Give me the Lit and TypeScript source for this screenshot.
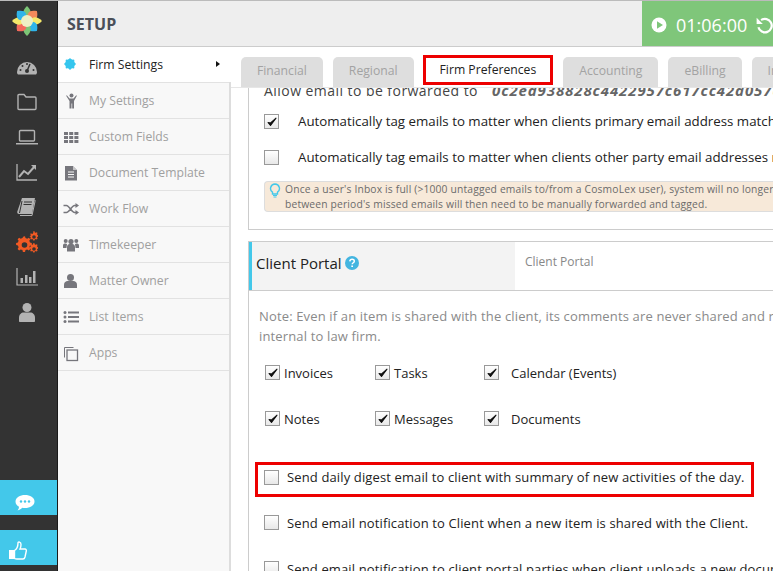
import { LitElement, html, css, svg } from "lit";
import { customElement } from "lit/decorators.js";

const railIcons = [
  svg`<path d="M1 16a10 10 0 1 1 20 0c0 1-.4 2-1 2.500H2c-.6-.5-1-1.500-1-2.500z" fill="#b3b3b3"/><circle cx="11" cy="15" r="2" fill="#333"/><path d="M11 15l3-7" stroke="#333" stroke-width="1.500"/><g fill="#333"><circle cx="4.500" cy="14" r="1"/><circle cx="6.500" cy="10" r="1"/><circle cx="11" cy="8" r="1"/><circle cx="17.500" cy="14" r="1"/></g>`,
  svg`<path d="M2 17.500V4.500c0-.6.400-1 1-1h5l2 2.500h9c.6 0 1 .4 1 1v10.500c0 .6-.4 1-1 1H3c-.6 0-1-.4-1-1z" fill="none" stroke="#b3b3b3" stroke-width="1.400"/>`,
  svg`<rect x="3.500" y="4.500" width="15" height="10.500" rx="1" fill="none" stroke="#b3b3b3" stroke-width="1.400"/><path d="M0 17h22v1.500H0z" fill="#b3b3b3"/>`,
  svg`<path d="M1 3v16h20" fill="none" stroke="#b3b3b3" stroke-width="1.300"/><path d="M3 16l5-6 4 3 7-8" fill="none" stroke="#b3b3b3" stroke-width="2"/><path d="M15 4h5v5z" fill="#b3b3b3"/>`,
  svg`<path d="M6 2h13l-3 16H3c-1.500 0-2-1-1.700-2.500z" fill="#b3b3b3"/><path d="M6 5l-2.500 12M8 6h8M7.500 8.500h8" stroke="#333" stroke-width="1"/><path d="M19 4v1.500l-3 14H4" fill="none" stroke="#b3b3b3"/>`,
  svg`<g fill="#f15a24"><path d="M7.500 5.500l1.500-.3.500 1.800 1.700.7 1.600-1 1.500 1.500-1 1.600.7 1.700 1.800.5v2.100l-1.800.5-.7 1.700 1 1.600-1.500 1.500-1.600-1-1.700.7-.5 1.800h-2.100l-.5-1.800-1.700-.7-1.600 1-1.500-1.500 1-1.600-.7-1.700-1.800-.5v-2.100l1.800-.5.7-1.700-1-1.600 1.500-1.500 1.600 1 1.700-.7z"/><path fill-rule="evenodd" d="M17.500 0l1 .2.300 1.200 1 .4 1-.6.800.8-.6 1 .4 1 1.200.3v1.200l-1.200.3-.4 1 .6 1-.8.8-1-.6-1 .4-.3 1.200h-1.200l-.3-1.200-1-.4-1 .6-.8-.8.6-1-.4-1-1.200-.3V5.400l1.200-.3.4-1-.6-1 .8-.8 1 .6 1-.4.300-1.200zM18 4.200a1.800 1.800 0 1 0 0 3.600 1.800 1.800 0 0 0 0-3.600z"/><path fill-rule="evenodd" d="M17.500 12l1 .2.300 1.200 1 .4 1-.6.800.8-.6 1 .4 1 1.200.3v1.200l-1.200.3-.4 1 .6 1-.8.8-1-.6-1 .4-.3 1.200h-1.200l-.3-1.200-1-.4-1 .6-.8-.8.6-1-.4-1-1.200-.3v-1.200l1.200-.3.4-1-.6-1 .8-.8 1 .6 1-.4.300-1.200zm.5 4.200a1.800 1.800 0 1 0 0 3.600 1.800 1.800 0 0 0 0-3.600z"/></g><circle cx="8.500" cy="14" r="2.800" fill="#333"/>`,
  svg`<path d="M1 2v17h21" fill="none" stroke="#b3b3b3" stroke-width="1.200"/><path d="M4.500 12h2.500v5H4.500zM9 9h2.500v8H9zM13 11h2.500v6H13zM17 5h2.500v12H17z" fill="#b3b3b3"/>`,
  svg`<circle cx="11" cy="6.500" r="4.500" fill="#b3b3b3"/><path d="M3 20v-3.500c0-3 2.500-5 4.500-5h7c2 0 4.500 2 4.500 5V20c0 .6-.4 1-1 1H4c-.6 0-1-.4-1-1z" fill="#b3b3b3"/>`,
];

const g = "#76767c";
const sideIcons = [
  svg`<circle cx="8" cy="8" r="5" fill="#35c6ee"/><g fill="#35c6ee"><circle cx="8" cy="3.200" r="1"/><circle cx="8" cy="12.800" r="1"/><circle cx="3.200" cy="8" r="1"/><circle cx="12.800" cy="8" r="1"/><circle cx="4.600" cy="4.600" r="1"/><circle cx="11.400" cy="4.600" r="1"/><circle cx="4.600" cy="11.400" r="1"/><circle cx="11.400" cy="11.400" r="1"/></g>`,
  svg`<circle cx="9.500" cy="3.500" r="2" fill="${g}"/><path d="M4 3.500l1 0 2.500 3h4l2.500-3 1 0-3 5.500v7.500h-1.800v-5h-.7v5H7.500V9z" fill="${g}"/>`,
  svg`<path d="M2 4h4v3H2zM7.200 4h4v3h-4zM12.400 4h4v3h-4zM2 8h4v3H2zM7.200 8h4v3h-4zM12.400 8h4v3h-4zM2 12h4v3H2zM7.200 12h4v3h-4zM12.400 12h4v3h-4z" fill="${g}"/>`,
  svg`<path d="M3 2h8l4 4v10.500H3z" fill="${g}"/><path d="M6 8h6M6 10.500h6M6 13h6" stroke="#f8f8f8" stroke-width="1"/><path d="M11 2v4h4" fill="#f8f8f8" opacity=".6"/>`,
  svg`<path d="M1.500 5.500h3c2.500 0 5.500 7 8 7h1.500M1.500 12.500h3c2.500 0 5.500-7 8-7h1.500" fill="none" stroke="${g}" stroke-width="1.700"/><path d="M13.500 3l3.500 2.500-3.500 2.500zM13.500 10l3.500 2.500-3.500 2.500z" fill="${g}"/>`,
  svg`<g fill="${g}"><circle cx="9" cy="5.500" r="2.600"/><circle cx="3.700" cy="5" r="2"/><circle cx="14.300" cy="5" r="2"/><path d="M1 12V9.500C1 8 2 7.500 3.500 7.500l1.500.5-.5 4zM17 12V9.500c0-1.500-1-2-2.500-2l-1.500.5.5 4zM5 15.500v-4.500c0-2 1.500-3 2.500-3h3c1 0 2.500 1 2.500 3v4.500z"/></g>`,
  svg`<circle cx="8.500" cy="5.500" r="3.500" fill="${g}"/><path d="M2 16v-3.500c0-2 2-3.500 3.500-3.500h6c1.500 0 3.500 1.500 3.500 3.500V16z" fill="${g}"/>`,
  svg`<g fill="${g}"><circle cx="3" cy="4.500" r="1.500"/><circle cx="3" cy="9" r="1.500"/><circle cx="3" cy="13.500" r="1.500"/><path d="M6 3.500h11v2H6zM6 8h11v2H6zM6 12.500h11v2H6z"/></g>`,
  svg`<path d="M11.500 3.500h-9v10" fill="none" stroke="${g}" stroke-width="1"/><rect x="5" y="6" width="10.500" height="10.500" fill="none" stroke="${g}" stroke-width="1.300"/>`,
];

const menu = ["Firm Settings","My Settings","Custom Fields","Document Template","Work Flow","Timekeeper","Matter Owner","List Items","Apps"];
const tabs = ["Financial","Regional","Firm Preferences","Accounting","eBilling","Integrations"];

const check = (on: boolean) => html`<span class="cb">${on ? html`<svg viewBox="0 0 14 14" width="14" height="14"><path d="M3 7.500l2.500 3L11 3.200 5.600 8z" fill="#111" stroke="#111" stroke-width="1.100" stroke-linejoin="round"/></svg>` : ""}</span>`;

@customElement("app-root")
export class AppRoot extends LitElement {
  static styles = css`
    :host { display: block; width: 773px; height: 571px; overflow: hidden; font-family: "Open Sans", sans-serif; color: #222; background: #fff; }
    * { box-sizing: border-box; }
    .app { display: flex; height: 571px; border-top: 1px solid #bbb; }
    .rail { width: 58px; flex: none; background: #333; border-right: 1px solid #1a1a1a; display: flex; flex-direction: column; align-items: center; }
    .logo { margin: 2px 0 0 -3px; height: 36px; flex: none; }
    .rail-icons { display: flex; flex-direction: column; align-items: center; gap: 13px; margin: 17px 0 0 -3px; }
    .rail-icons svg { display: block; }
    .cta { width: 57px; height: 35px; background: #43c8ea; margin-right: 1px; display: flex; align-items: center; justify-content: center; }
    .cta.chat { margin-top: auto; }
    .cta.like { margin: 15px 1px 6px 0; justify-content: flex-start; padding-left: 9px; }
    .cta.chat svg { margin: 10px 6px 0 0; }
    .cta.like svg { margin-top: 6px; }
    .main { flex: 1; min-width: 0; display: flex; flex-direction: column; }
    .top { height: 46px; flex: none; background: #eee; border-bottom: 1px solid #ccc; display: flex; align-items: stretch; justify-content: space-between; }
    .top h1 { margin: 0; padding: 1px 0 0 9px; font-size: 16px; line-height: 45px; font-weight: 700; color: #4a4f58; }
    .timer { width: 131px; background: #7fc67a; color: #fff; display: flex; align-items: center; padding: 2px 0 0 9px; gap: 9px; font-size: 18px; white-space: nowrap; overflow: hidden; }
    .timer svg { flex: none; }
    .body { flex: 1; min-height: 0; display: flex; }
    .side { width: 173px; flex: none; background: #f8f8f8; border-right: 2px solid #ddd; padding-top: 35px; position: relative; }
    .mi { height: 36px; border-top: 1px solid #e2e2e2; display: flex; align-items: center; font-size: 12.200px; color: #a0a0a0; padding-left: 4px; }
    .mi:last-child { border-bottom: 1px solid #e2e2e2; height: 37px; }
    .mi svg { flex: none; margin-right: 9px; }
    .mi.on { position: absolute; top: 0; left: 0; width: 173px; height: 35px; background: #fff; border: 0; color: #222; }
    .caret { position: absolute; left: 158px; top: 14px; width: 0; height: 0; border-left: 4px solid #111; border-top: 3px solid transparent; border-bottom: 3px solid transparent; }
    .content { flex: 1; min-width: 0; display: flex; flex-direction: column; overflow: hidden; }
    .tabs { height: 41px; flex: none; display: flex; align-items: flex-end; gap: 10px; padding: 0 0 0 10px; border-bottom: 1px solid #e6e6e6; white-space: nowrap; }
    .tab { height: 30px; background: #dedede; border-radius: 5px 5px 0 0; color: #a3a3a3; font-size: 12.200px; line-height: 28px; padding: 0 16px; flex: none; }
    .tab.on { height: 30px; margin: 0 0 2px -1px; background: #fff; border: 3px solid #ed0000; border-radius: 0; color: #222; line-height: 24px; padding: 0 14px; }
    .scroll { flex: 1; min-height: 0; overflow: hidden; padding-left: 17px; font-size: 13.500px; }
    .panel1 { width: 560px; border: 1px solid #ccc; border-right: 0; border-top: 0; height: 142px; padding: 0 0 0 15px; overflow: hidden; }
    .fw { margin-top: -8px; line-height: 20px; font-size: 14px; white-space: nowrap; color: #444; letter-spacing: .45px; }
    .fw b { font-style: italic; font-size: 15px; color: #666; margin-left: 10px; letter-spacing: .9px; }
    .row1 { display: flex; align-items: center; height: 22px; white-space: nowrap; font-size: 13.300px; }
    .row1 .cb { margin-right: 19px; }
    .row1.a { margin-top: 9px; }
    .row1.b { margin-top: 14px; }
    .cb { width: 15px; height: 15px; flex: none; display: inline-block; border: 1px solid #999; background: linear-gradient(#fff, #e8e8e8); }
    .cb svg { display: block; }
    .tip { margin-top: 13px; width: 561px; height: 31px; background: #f7e9d9; border: 1px solid #ddd; border-right: 0; border-radius: 4px 0 0 4px; font-size: 10.300px; line-height: 15px; padding: 0 0 0 4px; display: flex; gap: 4px; color: #6b6b6b; white-space: nowrap; letter-spacing: .16px; }
    .tip svg { flex: none; margin-top: 1px; }
    .panel2 { margin-top: 11px; width: 560px; border-left: 1px solid #ccc; }
    .ph { display: flex; height: 50px; border-top: 1px solid #ccc; border-bottom: 1px solid #ccc; }
    .ph-l { width: 266px; background: #f3f3f3; border-left: 3px solid #43c8ea; font-size: 15px; padding: 11px 0 0 4px; display: flex; gap: 3px; line-height: 20px; flex: none; }
    .ph-l svg { margin-top: 3px; }
    .ph-r { font-size: 12px; color: #888; padding: 11px 0 0 10px; line-height: 18px; white-space: nowrap; }
    .note { margin: 15px 0 0 10px; font-size: 13px; line-height: 20px; color: #8a8a8a; white-space: nowrap; letter-spacing: .15px; }
    .grid { margin: 19px 0 0 16px; display: grid; grid-template-columns: 110px 109px 1fr; row-gap: 31px; font-size: 13px; }
    .grid label { display: flex; align-items: center; height: 15px; gap: 4px; white-space: nowrap; }
    .grid label:nth-child(3n) { gap: 12px; }
    .opt { display: flex; align-items: center; gap: 8px; white-space: nowrap; font-size: 13px; height: 35px; letter-spacing: .13px; }
    .opt.hl { margin: 36px 0 0 6px; width: 499px; border: 3px solid #ed0000; padding: 0 0 5px 6px; }
    .opt.p { margin: 8px 0 0 15px; }
    .opt.l { margin: 11px 0 0 15px; }
  `;

  private logo() {
    const colors = ["#7cc576", "#f58a5b", "#f5e86a", "#2fb4ea", "#7cc576", "#f4695b", "#f5e86a", "#2fb4ea"];
    return svg`<svg class="logo" width="32" height="36" viewBox="-16 -18 32 36">
      ${colors.map((c, i) => svg`<path d="${i % 2 ? "M0 -14C6.500 -10 6.500 -5 0 -2C-6.500 -5 -6.500 -10 0 -14z" : "M0 -15C5 -10 5 -6 0 -2C-5 -6 -5 -10 0 -15z"}" fill="${c}" transform="rotate(${i * 45})"/>`)}
      <circle r="6" fill="#eef0c4"/>
    </svg>`;
  }

  render() {
    return html`<div class="app">
      <nav class="rail">
        ${this.logo()}
        <div class="rail-icons">
          ${railIcons.map(i => html`<svg width="22" height="22" viewBox="0 0 22 22">${i}</svg>`)}
        </div>
        <div class="cta chat"><svg width="20" height="16" viewBox="0 0 20 16"><path d="M10 0c5 0 9.500 2.500 9.500 6.500S15 13 10 13c-1 0-1.800-.1-2.600-.3C6 14 4.500 15 2.500 15.500c1-1.200 1.500-2.300 1.500-3.700C1.800 10.700.500 8.800.500 6.500.500 2.500 5 0 10 0z" fill="#fff"/><g fill="#43c8ea"><circle cx="6" cy="6.500" r="1.200"/><circle cx="10" cy="6.500" r="1.200"/><circle cx="14" cy="6.500" r="1.200"/></g></svg></div>
        <div class="cta like"><svg width="18" height="19" viewBox="0 0 18 19"><path d="M0 9h5v9H0z" fill="#fff"/><path d="M5.500 9.500C8 8 9 5 9 2c0-1.500 3-1.500 3 1.500 0 2-.5 3.500-1 4.500h5c1 0 1.500 1 1.300 2l-1.300 6c-.3 1.200-1 2-2 2H8c-1.500 0-2.500-.5-2.500-1z" fill="none" stroke="#fff" stroke-width="1.400"/></svg></div>
      </nav>
      <div class="main">
        <header class="top">
          <h1>SETUP</h1>
          <div class="timer">
            <svg width="16" height="16" viewBox="0 0 16 16"><circle cx="8" cy="8" r="7.500" fill="#fff"/><path d="M6 4.200l6 3.800-6 3.800z" fill="#7fc67a"/></svg>
            <span>01:06:00</span>
            <svg width="17" height="18" viewBox="0 0 14 16"><path d="M4 3.600A6 6 0 1 1 1.600 10" fill="none" stroke="#fff" stroke-width="2"/><path d="M0 1.500v5.500h5.500z" fill="#fff"/></svg>
          </div>
        </header>
        <div class="body">
          <aside class="side">
            ${menu.map((m, i) => html`<div class="mi ${i === 0 ? "on" : ""}"><svg width="18" height="18" viewBox="0 0 18 18">${sideIcons[i]}</svg>${m}${i === 0 ? html`<span class="caret"></span>` : ""}</div>`)}
          </aside>
          <section class="content">
            <div class="tabs">
              ${tabs.map(t => html`<div class="tab ${t === "Firm Preferences" ? "on" : ""}">${t}</div>`)}
            </div>
            <div class="scroll">
              <div class="panel1">
                <div class="fw">Allow email to be forwarded to <b>0c2ea938828c4422957c617cc42a057c</b></div>
                <div class="row1 a">${check(true)}Automatically tag emails to matter when clients primary email address matches</div>
                <div class="row1 b">${check(false)}Automatically tag emails to matter when clients other party email addresses match</div>
                <div class="tip">
                  <svg width="12" height="15" viewBox="0 0 12 15"><path d="M6 1a4.500 4.500 0 0 0-2.500 8.200V11h5V9.200A4.500 4.500 0 0 0 6 1z" fill="none" stroke="#43c8ea" stroke-width="1.400"/><path d="M4 12.500h4M4.500 14h3" stroke="#43c8ea"/></svg>
                  <div>Once a user's Inbox is full (&gt;1000 untagged emails to/from a CosmoLex user), system will no longer<br>between period's missed emails will then need to be manually forwarded and tagged.</div>
                </div>
              </div>
              <div class="panel2">
                <div class="ph">
                  <div class="ph-l">Client Portal <svg width="14" height="14" viewBox="0 0 14 14"><circle cx="7" cy="7" r="7" fill="#43b5e0"/><path d="M4.800 5.300C5 3.800 6 3.300 7.100 3.300c1.300 0 2.200.8 2.200 1.900 0 1.600-2.100 1.500-2.100 3" fill="none" stroke="#fff" stroke-width="1.500"/><path d="M6.300 9.400h1.700V11H6.300z" fill="#fff"/></svg></div>
                  <div class="ph-r">Client Portal</div>
                </div>
                <div class="note">Note: Even if an item is shared with the client, its comments are never shared and remain<br>internal to law firm.</div>
                <div class="grid">
                  ${["Invoices","Tasks","Calendar (Events)","Notes","Messages","Documents"].map(t => html`<label>${check(true)}${t}</label>`)}
                </div>
                <div class="opt hl">${check(false)}Send daily digest email to client with summary of new activities of the day.</div>
                <div class="opt p">${check(false)}Send email notification to Client when a new item is shared with the Client.</div>
                <div class="opt l">${check(false)}Send email notification to client portal parties when client uploads a new document.</div>
              </div>
            </div>
          </section>
        </div>
      </div>
    </div>`;
  }
}
